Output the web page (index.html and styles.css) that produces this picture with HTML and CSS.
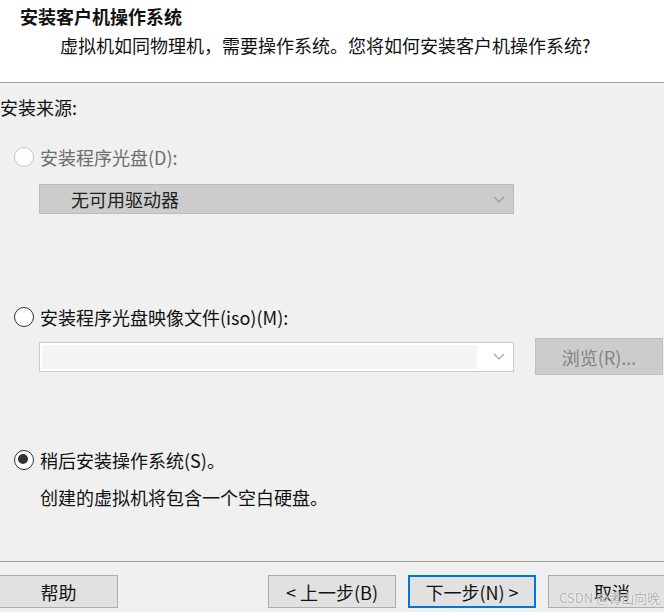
FILE: index.html
```html
<!DOCTYPE html>
<html lang="zh-CN">
<head>
<meta charset="utf-8">
<link rel="stylesheet" href="styles.css">
</head>
<body>
<div class="dialog">
  <header class="header">
    <div class="title">安装客户机操作系统</div>
    <div class="subtitle">虚拟机如同物理机，需要操作系统。您将如何安装客户机操作系统?</div>
  </header>
  <main class="main">
    <div class="section-label">安装来源:</div>

    <div class="radio-row row-1">
      <span class="radio disabled"></span>
      <span class="label disabled-text">安装程序光盘(D):</span>
    </div>
    <div class="select disabled-select">
      <span class="select-text">无可用驱动器</span>
      <svg class="chev" width="12" height="7" viewBox="0 0 12 7"><path d="M1 1 L6 6 L11 1" fill="none" stroke="#9a9a9a" stroke-width="1.2"/></svg>
    </div>

    <div class="radio-row row-2">
      <span class="radio"></span>
      <span class="label">安装程序光盘映像文件(iso)(M):</span>
    </div>
    <div class="iso-row">
      <div class="combo">
        <div class="combo-input"></div>
        <svg class="chev" width="12" height="7" viewBox="0 0 12 7"><path d="M1 1 L6 6 L11 1" fill="none" stroke="#a0a0a0" stroke-width="1.1"/></svg>
      </div>
      <div class="btn btn-disabled browse">浏览(R)...</div>
    </div>

    <div class="radio-row row-3">
      <span class="radio checked"></span>
      <span class="label">稍后安装操作系统(S)。</span>
    </div>
    <div class="note">创建的虚拟机将包含一个空白硬盘。</div>
  </main>
  <footer class="footer">
    <div class="btn help">帮助</div>
    <div class="nav">
      <div class="btn">&lt; 上一步(B)</div>
      <div class="btn primary">下一步(N) &gt;</div>
      <div class="btn">取消</div>
    </div>
    <div class="watermark">CSDN @青山向晚</div>
  </footer>
</div>
</body>
</html>
```
FILE: styles.css
```css
* { box-sizing: border-box; }
html, body {
  margin: 0;
  padding: 0;
  background: #f0f0f0;
}
body {
  width: 664px;
  height: 612px;
  overflow: hidden;
  font-family: "Noto Sans CJK SC", "Noto Sans", sans-serif;
  font-size: 18px;
  color: #111;
}
.dialog {
  width: 664px;
  height: 612px;
  display: flex;
  flex-direction: column;
  position: relative;
}
.header {
  height: 83px;
  background: #fff;
  border-bottom: 1px solid #a0a0a0;
  padding-top: 4px;
  flex: none;
}
.title {
  font-weight: bold;
  font-size: 18px;
  line-height: 24px;
  padding-left: 20px;
}
.subtitle {
  margin-top: 5px;
  line-height: 24px;
  padding-left: 60px;
}
.main {
  height: 479px;
  flex: none;
  padding-top: 12px;
  border-bottom: 1px solid #a0a0a0;
}
.section-label {
  line-height: 24px;
}
.radio-row {
  display: flex;
  align-items: center;
  height: 24px;
  padding-left: 14px;
}
.row-1 { margin-top: 26px; }
.row-2 { margin-top: 91px; }
.row-3 { margin-top: 73px; }
.radio {
  width: 20px;
  height: 20px;
  border-radius: 50%;
  border: 1.6px solid #333;
  background: #fff;
  flex: none;
  position: relative;
  margin-right: 6px;
}
.radio.disabled {
  border: 1px solid #c8c8c8;
}
.radio.checked::after {
  content: "";
  position: absolute;
  left: 3.4px;
  top: 3.4px;
  width: 10px;
  height: 10px;
  border-radius: 50%;
  background: #333;
}
.label { line-height: 24px; }
.disabled-text { color: #6d6d6d; }
.select {
  margin: 15px 0 0 39px;
  width: 475px;
  height: 30px;
  display: flex;
  align-items: center;
  justify-content: space-between;
  padding: 0 8px 0 31px;
}
.disabled-select {
  background: #cccccc;
  border: 1px solid #bcbcbc;
}
.select-text { color: #222; line-height: 24px; }
.chev { flex: none; }
.iso-row {
  display: flex;
  align-items: center;
  margin-top: 9px;
  height: 37px;
}
.combo {
  margin-left: 39px;
  width: 475px;
  height: 30px;
  border: 1px solid #cccccc;
  background: #fff;
  display: flex;
  align-items: center;
  padding: 2px 8px 2px 2px;
}
.combo-input {
  height: 100%;
  flex: 1;
  background: #f4f4f4;
  margin-right: 16px;
}
.btn {
  height: 33px;
  width: 128px;
  background: #e1e1e1;
  border: 1px solid #adadad;
  display: flex;
  align-items: center;
  justify-content: center;
  line-height: 24px;
  color: #111;
  flex: none;
}
.btn-disabled {
  background: #cccccc;
  border-color: #bfbfbf;
  color: #838383;
}
.browse {
  margin-left: 21px;
  height: 37px;
}
.note {
  margin-top: 13px;
  padding-left: 40px;
  line-height: 24px;
}
.footer {
  flex: 1;
  display: flex;
  padding-top: 13px;
  position: relative;
}
.help {
  width: 119px;
  margin-left: -1px;
}
.nav {
  display: flex;
  gap: 12px;
  margin-left: 150px;
}
.primary {
  border: 2px solid #0078d7;
}
.watermark {
  position: absolute;
  left: 559px;
  top: 28px;
  font-size: 13px;
  line-height: 16px;
  color: rgba(150, 150, 150, 0.75);
  text-shadow: 0 0 2px #fff, 0 0 1px #fff;
  white-space: nowrap;
}
```
